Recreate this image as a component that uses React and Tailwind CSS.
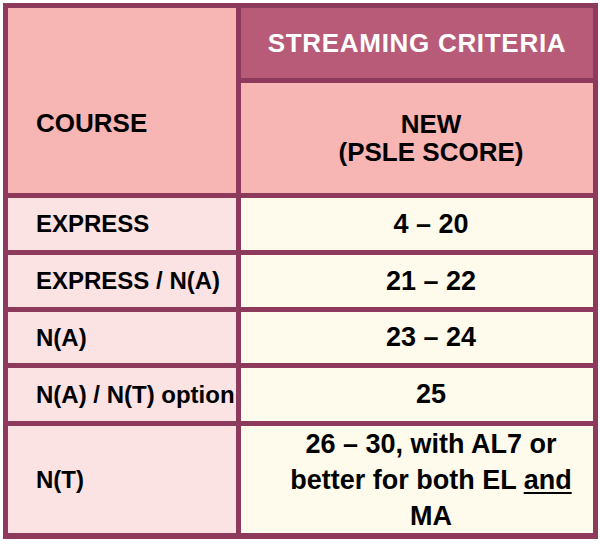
import { Fragment } from "react";

const rows = [
  { course: "EXPRESS", score: "4 – 20" },
  { course: "EXPRESS / N(A)", score: "21 – 22" },
  { course: "N(A)", score: "23 – 24" },
  { course: "N(A) / N(T) option", score: "25" },
];

const App = () => {
  return (
    <div className="min-h-[544px] w-[600px] bg-white pl-[3px] pt-[3px] font-['Liberation_Sans',Arial,sans-serif] font-bold text-black">
      <div className="grid w-fit grid-cols-[228px_352px] grid-rows-[70px_110px_52px_52px_51px_53px_107px] gap-[5px] bg-[#8e3a5c] p-[5px] pb-[6px]">
        {/* header: course spans both header rows */}
        <div className="row-span-2 flex items-center bg-[#f7b5b4] pl-[28px] pt-[46px] text-[26px]">
          COURSE
        </div>
        <div className="flex items-center justify-center bg-[#b85b78] text-[26px] tracking-[0.7px] text-white">
          STREAMING CRITERIA
        </div>
        <div className="flex flex-col items-center justify-center bg-[#f7b5b4] pl-[28px] text-center text-[26px] leading-[28px]">
          <span>NEW</span>
          <span>(PSLE SCORE)</span>
        </div>

        {rows.map((r) => (
          <Fragment key={r.course}>
            <div className="flex items-center bg-[#fbe3e3] pl-[28px] text-[24px] whitespace-nowrap">
              {r.course}
            </div>
            <div className="flex items-center justify-center bg-[#fffbec] pl-[28px] text-[27px]">
              {r.score}
            </div>
          </Fragment>
        ))}

        <div className="flex items-center bg-[#fbe3e3] pl-[28px] text-[24px]">N(T)</div>
        <div className="flex items-center justify-center bg-[#fffbec] pl-[28px] text-center text-[27px] leading-[36px] whitespace-nowrap">
          <p>
            26 – 30, with AL7 or
            <br />
            better for both EL <span className="underline decoration-2 underline-offset-[3px]">and</span>
            <br />
            MA
          </p>
        </div>
      </div>
    </div>
  );
};

export default App;
